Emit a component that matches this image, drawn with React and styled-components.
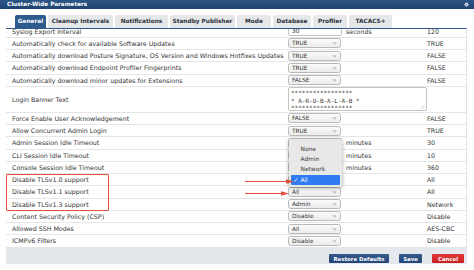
import React from "react";
import styled, { createGlobalStyle } from "styled-components";

const GlobalStyle = createGlobalStyle`
  html, body { margin: 0; padding: 0; background: #fff; }
  body { font-family: "DejaVu Sans", Verdana, sans-serif; color: #333; }
  * { box-sizing: border-box; }
`;

const Window = styled.div`
  width: 474px;
  height: 270px;
  display: flex;
  flex-direction: column;
  overflow: hidden;
  background: #fff;
`;

const TitleBar = styled.div`
  height: 9px;
  flex: none;
  display: flex;
  align-items: center;
  justify-content: space-between;
  padding: 0 5px 0 7px;
  background: linear-gradient(#2c5585, #1f4472);
  color: #fff;
  font-weight: bold;
  font-size: 5.7px;
  line-height: 9px;
`;

const TabBar = styled.div`
  margin-top: 6px;
  height: 12.5px;
  flex: none;
  display: flex;
  align-items: stretch;
  padding-left: 15px;
  gap: 2px;
`;

const Tab = styled.div`
  width: ${(p) => p.$w}px;
  display: flex;
  align-items: center;
  justify-content: center;
  border-radius: 2px 2px 0 0;
  font-weight: bold;
  font-size: 5.8px;
  white-space: nowrap;
  background: ${(p) => (p.$active ? "#2d5b8e" : "#e6e7e8")};
  color: ${(p) => (p.$active ? "#fff" : "#2b3440")};
`;

const Panel = styled.div`
  position: relative;
  margin: 0 7px 0 6px;
  height: 220.5px;
  flex: none;
  overflow: hidden;
  border-top: 1.5px solid #2d5b8e;
  border-right: 1px solid #e2e2e2;
`;

const List = styled.div`
  margin-top: -3px;
`;

const Row = styled.div`
  display: grid;
  grid-template-columns: 282px 58px 81px 1fr;
  align-items: center;
  height: ${(p) => p.$h || 12.25}px;
  border-bottom: 1px solid #e6e6e6;
  font-size: 6.3px;
  color: #333;
  white-space: nowrap;
`;

const Label = styled.div`
  padding-left: 6px;
`;

const Cell = styled.div`
  display: flex;
  align-items: center;
`;

const Wide = styled.div`
  grid-column: span 2;
  display: flex;
  align-items: center;
`;

const SelectBox = styled.div`
  width: 53px;
  height: 10px;
  border: 1px solid #b9b9b9;
  border-radius: 2.5px;
  background: linear-gradient(#fbfbfb, #ececec);
  display: flex;
  align-items: center;
  justify-content: space-between;
  padding: 0 3px 0 3px;
  font-size: 5.8px;
  color: #333;
`;

const TextInput = styled.div`
  width: 54px;
  height: 10px;
  border: 1px solid #c4c4c4;
  border-radius: 2px;
  background: #fff;
  display: flex;
  align-items: center;
  padding-left: 3px;
  font-size: 5.8px;
`;

const TextArea = styled.div`
  position: relative;
  width: 140px;
  height: 24px;
  border: 1px solid #c4c4c4;
  border-radius: 2px;
  background: #fff;
  padding: 1px 0 0 2px;
  font-family: "DejaVu Sans Mono", monospace;
  font-size: 6px;
  line-height: 7.4px;
  white-space: pre;
  color: #333;
`;

const Grip = styled.svg`
  position: absolute;
  right: 1px;
  bottom: 1px;
`;

const Footer = styled.div`
  margin: 0 7px 0 6px;
  height: 16px;
  flex: none;
  background: #e4e8ec;
  display: flex;
  justify-content: flex-end;
  align-items: flex-start;
  padding: 6px 3px 0 0;
  gap: 10px;
`;

const Button = styled.div`
  width: ${(p) => p.$w}px;
  height: 9px;
  display: flex;
  align-items: center;
  justify-content: center;
  font-weight: bold;
  font-size: 5.4px;
  color: #fff;
  border-radius: 1px;
  background: ${(p) =>
    p.$danger
      ? "linear-gradient(#e0383a, #c8201f)"
      : "linear-gradient(#34598a, #24467a)"};
`;

const Popup = styled.div`
  position: absolute;
  left: 282.5px;
  top: 110px;
  width: 53px;
  height: 48px;
  background: #e8e8e8;
  border-radius: 3px;
  box-shadow: 0 1px 4px rgba(0, 0, 0, 0.35);
  padding: 5px 2px 0 2px;
  font-size: 5.9px;
  color: #3a3a3a;
`;

const Option = styled.div`
  height: ${(p) => (p.$selected ? 10 : 10.2)}px;
  display: flex;
  align-items: center;
  padding-left: ${(p) => (p.$selected ? 3 : 10)}px;
  gap: 2px;
  border-radius: 1px;
  background: ${(p) => (p.$selected ? "#2f7bf0" : "transparent")};
  color: ${(p) => (p.$selected ? "#fff" : "#3a3a3a")};
  margin-top: ${(p) => (p.$selected ? 1 : 0)}px;
`;

const Highlight = styled.div`
  position: absolute;
  left: 0;
  top: 145px;
  width: 103px;
  height: 37px;
  border: 1.5px solid #e3503f;
  border-radius: 1px;
  pointer-events: none;
`;

const Arrows = styled.svg`
  position: absolute;
  left: 236px;
  top: 146px;
  pointer-events: none;
`;

const Chevron = () => (
  <svg width="5" height="4" viewBox="0 0 5 4">
    <path d="M0.8 1.2 L2.5 2.8 L4.2 1.2" fill="none" stroke="#777" strokeWidth="0.7" />
  </svg>
);

const Select = ({ value }) => (
  <SelectBox>
    <span>{value}</span>
    <Chevron />
  </SelectBox>
);

const rows = [
  { label: "Syslog Export Interval", input: "30", unit: "seconds", def: "120" },
  { label: "Automatically check for available Software Updates", select: "TRUE", def: "TRUE" },
  { label: "Automatically download Posture Signature, OS Version and Windows Hotfixes Updates", select: "TRUE", def: "FALSE" },
  { label: "Automatically download Endpoint Profiler Fingerprints", select: "TRUE", def: "FALSE" },
  { label: "Automatically download minor updates for Extensions", select: "FALSE", def: "FALSE" },
  { label: "Login Banner Text", banner: true },
  { label: "Force Enable User Acknowledgement", select: "FALSE", def: "FALSE" },
  { label: "Allow Concurrent Admin Login", select: "TRUE", def: "TRUE" },
  { label: "Admin Session Idle Timeout", input: " ", unit: "minutes", def: "30" },
  { label: "CLI Session Idle Timeout", input: " ", unit: "minutes", def: "10" },
  { label: "Console Session Idle Timeout", input: " ", unit: "minutes", def: "360" },
  { label: "Disable TLSv1.0 support", blank: true, def: "All" },
  { label: "Disable TLSv1.1 support", select: "All", def: "All" },
  { label: "Disable TLSv1.3 support", select: "Admin", def: "Network" },
  { label: "Content Security Policy (CSP)", select: "Disable", def: "Disable" },
  { label: "Allowed SSH Modes", select: "All", def: "AES-CBC" },
  { label: "ICMPv6 Filters", select: "Disable", def: "Disable" },
];

const tabs = [
  ["General", 31],
  ["Cleanup Intervals", 65],
  ["Notifications", 53],
  ["Standby Publisher", 65],
  ["Mode", 34],
  ["Database", 38],
  ["Profiler", 34],
  ["TACACS+", 43],
];

export default function App() {
  return (
    <>
      <GlobalStyle />
      <Window>
        <TitleBar>
          <span>Cluster-Wide Parameters</span>
          <svg width="5" height="5" viewBox="0 0 5 5">
            <circle cx="2.5" cy="2.5" r="2" fill="#dfe6ee" />
            <path d="M1.6 1.6 L3.4 3.4 M3.4 1.6 L1.6 3.4" stroke="#2a4f7e" strokeWidth="0.6" />
          </svg>
        </TitleBar>
        <TabBar>
          {tabs.map(([t, w], i) => (
            <Tab key={t} $w={w} $active={i === 0}>
              {t}
            </Tab>
          ))}
        </TabBar>
        <Panel>
          <List>
            {rows.map((r, i) =>
              r.banner ? (
                <Row key={i} $h={26}>
                  <Label>{r.label}</Label>
                  <Wide>
                    <TextArea>
                      {"*****************\n* A-R-U-B-A-L-A-B *\n*****************"}
                      <Grip width="5" height="5" viewBox="0 0 5 5">
                        <path d="M1 4.5 L4.5 1 M2.8 4.5 L4.5 2.8" stroke="#aaa" strokeWidth="0.5" />
                      </Grip>
                    </TextArea>
                  </Wide>
                  <Cell />
                </Row>
              ) : (
                <Row key={i}>
                  <Label>{r.label}</Label>
                  <Cell>
                    {r.select && <Select value={r.select} />}
                    {r.blank && <Select value="" />}
                    {r.input && <TextInput>{r.input.trim()}</TextInput>}
                  </Cell>
                  <Cell>{r.unit}</Cell>
                  <Cell>{r.def}</Cell>
                </Row>
              )
            )}
          </List>
          <Highlight />
          <Popup>
            <Option>None</Option>
            <Option>Admin</Option>
            <Option>Network</Option>
            <Option $selected>
              <span>✓</span>
              <span>All</span>
            </Option>
          </Popup>
          <Arrows width="56" height="24" viewBox="0 0 56 24">
            <path d="M3 6.5 L46 6.5" stroke="#e3503f" strokeWidth="1" />
            <path d="M52 6.5 L44 4.3 L44 8.7 Z" fill="#e3503f" />
            <path d="M3 18.5 L41 18.5" stroke="#e3503f" strokeWidth="1" />
            <path d="M47 18.5 L39 16.3 L39 20.7 Z" fill="#e3503f" />
          </Arrows>
        </Panel>
        <Footer>
          <Button $w={60}>Restore Defaults</Button>
          <Button $w={23}>Save</Button>
          <Button $w={32} $danger>
            Cancel
          </Button>
        </Footer>
      </Window>
    </>
  );
}
